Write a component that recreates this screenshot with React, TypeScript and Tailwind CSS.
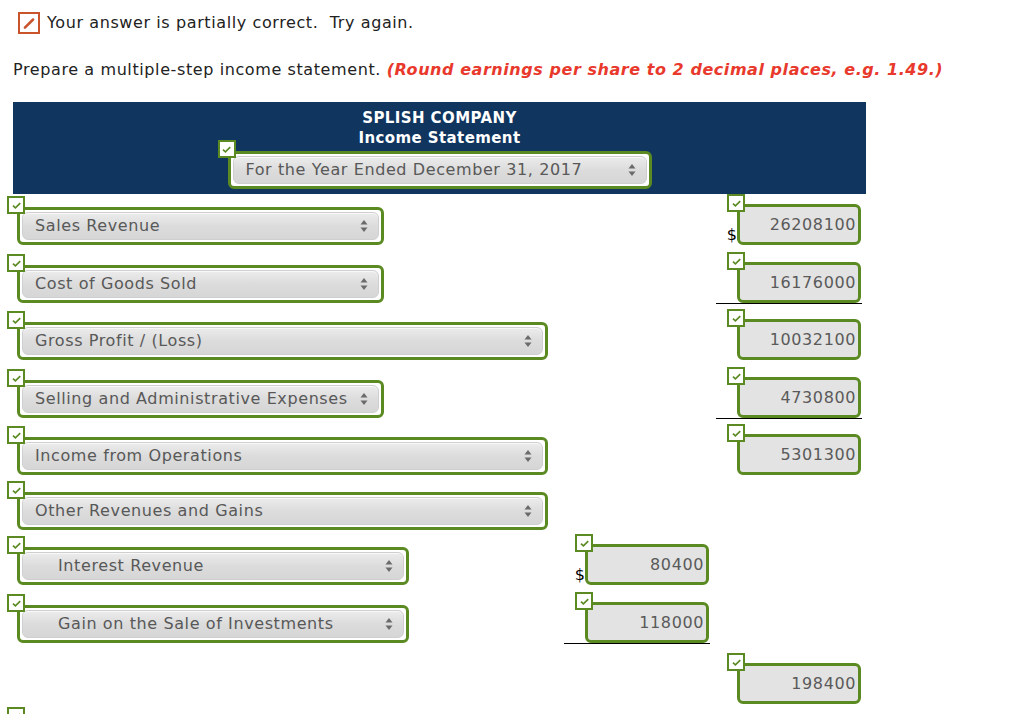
import React from 'react'

const FONT = { fontFamily: '"DejaVu Sans", Verdana, sans-serif' }

function Check({ className = '' }: { className?: string }) {
  return (
    <span
      className={`absolute z-10 flex h-[18px] w-[18px] items-center justify-center border-2 border-[#5b8a22] bg-white ${className}`}
    >
      <svg viewBox="0 0 10 10" className="h-[11px] w-[11px]">
        <path d="M1.8 5.2 L4 7.2 L8.4 2.8" stroke="#5b8a22" strokeWidth="1.5" fill="none" />
      </svg>
    </span>
  )
}

function Arrows() {
  return (
    <svg viewBox="0 0 8 14" className="h-[14px] w-[8px] shrink-0">
      <path d="M4 1 L7.5 5.5 L0.5 5.5 Z" fill="#6a6a6a" />
      <path d="M4 13 L7.5 8.5 L0.5 8.5 Z" fill="#6a6a6a" />
    </svg>
  )
}

function SelectBox({ label, width, indent = false }: { label: string; width: string; indent?: boolean }) {
  return (
    <div className={`relative rounded-[6px] border-[3px] border-[#5b8a22] bg-white p-[2px] ${width}`}>
      <Check className="-left-[13px] -top-[14px]" />
      <div className="flex h-[28px] items-center justify-between rounded-[6px] border border-[#cfcfcf] bg-gradient-to-b from-[#ececec] via-[#dcdcdc] to-[#d6d6d6] pl-[12px] pr-[10px] text-[16px] text-[#585858] shadow-[inset_0_1px_0_#f8f8f8]">
        <span className={`whitespace-nowrap ${indent ? 'pl-[23px]' : ''}`}>{label}</span>
        <Arrows />
      </div>
    </div>
  )
}

function Amount({ value, dollar = false }: { value: string; dollar?: boolean }) {
  return (
    <div className="flex items-end">
      {dollar && <span className="mb-[1px] text-[16px] leading-[18px] tracking-normal text-black">$</span>}
      <div className="relative flex h-[41px] w-[124px] items-center justify-end rounded-[6px] border-[3px] border-[#5b8a22] bg-[#e3e3e3] pr-[2px] text-[16px] text-[#5a5a5a]">
        <Check className="-left-[13px] -top-[13px]" />
        {value}
      </div>
    </div>
  )
}

type Row = {
  label: string
  width: string
  indent?: boolean
  height: string
  mid?: { value: string; dollar?: boolean; line?: boolean }
  right?: { value: string; dollar?: boolean; line?: boolean }
}

const ROWS: Row[] = [
  { label: 'Sales Revenue', width: 'w-[367px]', height: 'h-[58px]', right: { value: '26208100', dollar: true } },
  { label: 'Cost of Goods Sold', width: 'w-[367px]', height: 'h-[57px]', right: { value: '16176000', line: true } },
  { label: 'Gross Profit / (Loss)', width: 'w-[531px]', height: 'h-[58px]', right: { value: '10032100' } },
  { label: 'Selling and Administrative Expenses', width: 'w-[367px]', height: 'h-[57px]', right: { value: '4730800', line: true } },
  { label: 'Income from Operations', width: 'w-[531px]', height: 'h-[55px]', right: { value: '5301300' } },
  { label: 'Other Revenues and Gains', width: 'w-[531px]', height: 'h-[55px]' },
  { label: 'Interest Revenue', width: 'w-[392px]', indent: true, height: 'h-[58px]', mid: { value: '80400', dollar: true } },
  { label: 'Gain on the Sale of Investments', width: 'w-[392px]', indent: true, height: 'h-[58px]', mid: { value: '118000', line: true } },
]

export default function App() {
  return (
    <div className="min-h-[714px] w-[1024px] overflow-hidden bg-white text-[16px] tracking-[0.6px] text-[#222]" style={FONT}>
      <div className="h-[102px]">
        <div className="flex items-center gap-[7px] pl-[18px] pt-[12px]">
          <span className="flex h-[22px] w-[22px] items-center justify-center border-2 border-[#c9542b]">
            <svg viewBox="0 0 12 12" className="h-[14px] w-[14px]">
              <path d="M2.5 10 L9.5 3" stroke="#c9542b" strokeWidth="2.2" strokeLinecap="round" />
            </svg>
          </span>
          <span className="leading-[22px]">Your answer is partially correct.&nbsp; Try again.</span>
        </div>
        <p className="mt-[25px] pl-[13px] leading-[22px]">
          Prepare a multiple-step income statement.{' '}
          <span className="font-bold italic tracking-[0.55px] text-[#e8392c]">(Round earnings per share to 2 decimal places, e.g. 1.49.)</span>
        </p>
      </div>

      <div className="ml-[13px] flex h-[92px] w-[853px] flex-col items-center bg-[#10355f] pt-[6px] text-white">
        <div className="text-[15px] font-bold leading-[20px] tracking-[0.4px]">SPLISH COMPANY</div>
        <div className="text-[15px] font-bold leading-[20px] tracking-[0.4px]">Income Statement</div>
        <div className="mt-[3px]">
          <SelectBox label="For the Year Ended December 31, 2017" width="w-[424px]" />
        </div>
      </div>

      <div className="pt-[1px]">
        {ROWS.map((r) => (
          <div key={r.label} className={`flex items-start ${r.height}`}>
            <div className="w-[564px] pl-[17px] pt-[12px]">
              <SelectBox label={r.label} width={r.width} indent={r.indent} />
            </div>
            <div className={`flex w-[146px] justify-end pr-[1px] pt-[9px] ${r.mid?.line ? 'border-b border-black' : ''}`}>
              {r.mid && <Amount value={r.mid.value} dollar={r.mid.dollar} />}
            </div>
            <div className={`ml-[6px] flex w-[146px] justify-end pr-[1px] pt-[9px] ${r.right?.line ? 'border-b border-black' : ''}`}>
              {r.right && <Amount value={r.right.value} dollar={r.right.dollar} />}
            </div>
          </div>
        ))}
        <div className="flex h-[56px] items-start">
          <div className="w-[564px]" />
          <div className="w-[146px]" />
          <div className="ml-[6px] flex w-[146px] justify-end pr-[1px] pt-[12px]">
            <Amount value="198400" />
          </div>
        </div>
        <div className="relative pl-[7px]">
          <Check className="left-[7px] top-0" />
        </div>
      </div>
    </div>
  )
}
